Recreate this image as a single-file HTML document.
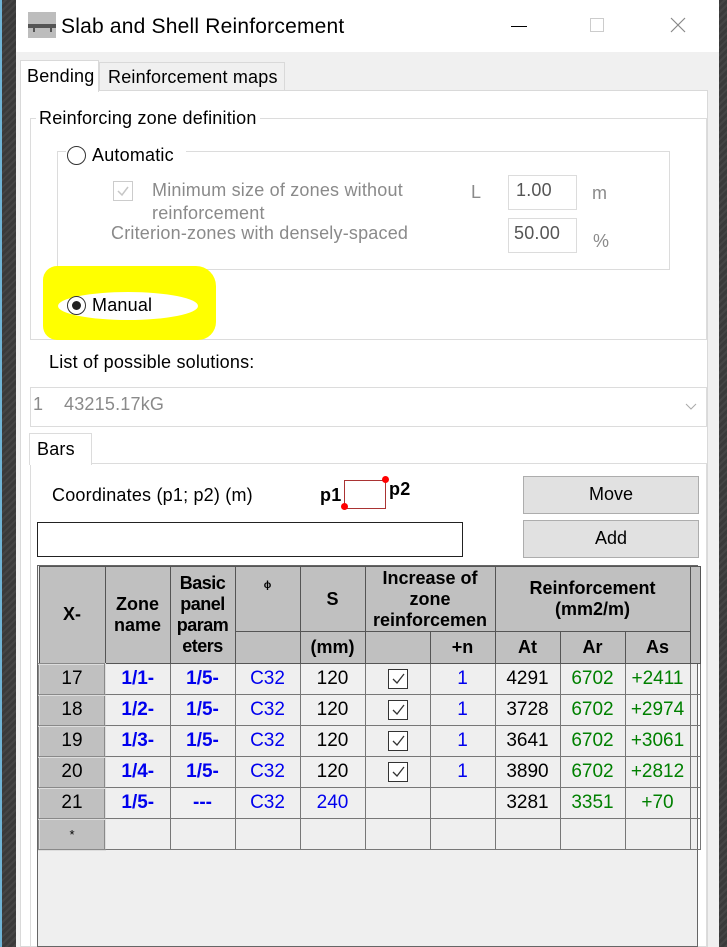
<!DOCTYPE html>
<html><head><meta charset="utf-8"><style>
*{margin:0;padding:0;box-sizing:border-box}
body{width:727px;height:947px;overflow:hidden;position:relative;background:#f0f0f0;font-family:"Liberation Sans",Arial,sans-serif;color:#000}
.a{position:absolute}
.t{position:absolute;font-size:17px;white-space:nowrap;line-height:20px;letter-spacing:0.2px}
.g{color:#8a8a8a}
.inp{position:absolute;background:#fff;border:1px solid #c8c8c8}
.btn{position:absolute;background:#e1e1e1;border:1px solid #adadad;text-align:center;font-size:17px;line-height:35px}
table{position:absolute;left:38px;top:566px;border-collapse:collapse;font-family:"Liberation Sans",Arial,sans-serif;font-weight:bold;font-size:19px;table-layout:fixed}
td{border:1px solid #777;text-align:center;height:31px;padding:0;overflow:hidden;white-space:nowrap}
th{background:#c0c0c0;border:1px solid #555;font-weight:bold;line-height:21px;padding:0;overflow:hidden;white-space:nowrap;font-size:18px}
.rh{background:#c0c0c0;font-weight:normal;border:2px outset #ddd}
.b{color:#0000ee}.n{font-weight:normal}.gr{color:#008000;font-weight:normal}
.sh{background:#f0f0f0}
.cb{display:inline-block;width:20px;height:20px;border:1px solid #333;background:#fff;vertical-align:middle;position:relative}
</style></head><body>
<div class="a" style="left:0;top:0;width:16px;height:947px;background:repeating-linear-gradient(135deg,#3a3a3a 0 3px,#454545 3px 5px)"></div>
<div class="a" style="left:0;top:0;width:2px;height:947px;background:#6fb4d6"></div>
<div class="a" style="left:719px;top:0;width:8px;height:947px;background:repeating-linear-gradient(135deg,#3a3a3a 0 3px,#454545 3px 5px)"></div>
<div class="a" style="left:16px;top:0;width:703px;height:52px;background:#fff"></div>
<div class="a" style="left:28px;top:12px;width:28px;height:26px;background:#bdbdbd"></div>
<div class="a" style="left:28px;top:24px;width:28px;height:4px;background:#555"></div>
<div class="a" style="left:33px;top:28px;width:2px;height:4px;background:#555"></div>
<div class="a" style="left:50px;top:28px;width:2px;height:4px;background:#555"></div>
<div class="t" style="left:61px;top:15px;font-size:21px;line-height:24px">Slab and Shell Reinforcement</div>
<div class="a" style="left:511px;top:26px;width:16px;height:1px;background:#000"></div>
<div class="a" style="left:590px;top:18px;width:14px;height:14px;border:1px solid #ccc"></div>
<svg class="a" style="left:670px;top:17px" width="16" height="16"><path d="M1 1L15 15M15 1L1 15" stroke="#888" stroke-width="1.2"/></svg>
<div class="a" style="left:20px;top:90px;width:688px;height:857px;background:#fff;border:1px solid #d9d9d9"></div>
<div class="a" style="left:20px;top:60px;width:79px;height:32px;background:#fff;border:1px solid #d9d9d9;border-bottom:none"></div>
<div class="t" style="left:27px;top:66px;font-size:18px">Bending</div>
<div class="a" style="left:99px;top:62px;width:186px;height:28px;background:#f0f0f0;border:1px solid #d9d9d9;border-bottom:none"></div>
<div class="t" style="left:108px;top:67px;font-size:18px">Reinforcement maps</div>
<div class="a" style="left:30px;top:118px;width:677px;height:222px;border:1px solid #dcdcdc"></div>
<div class="t" style="left:36px;top:108px;background:#fff;padding:0 3px;font-size:18px">Reinforcing zone definition</div>
<div class="a" style="left:57px;top:151px;width:613px;height:119px;border:1px solid #dcdcdc"></div>
<div class="a" style="left:66px;top:145px;width:120px;height:20px;background:#fff"></div>
<div class="a" style="left:67px;top:146px;width:19px;height:19px;border:1px solid #333;border-radius:50%;background:#fff"></div>
<div class="t" style="left:92px;top:145px;font-size:18px">Automatic</div>
<div class="a" style="left:113px;top:181px;width:20px;height:20px;border:1px solid #ccc"></div>
<svg class="a" style="left:115px;top:183px" width="16" height="16"><path d="M3 8L7 12L13 4" stroke="#c6c6c6" stroke-width="1.5" fill="none"/></svg>
<div class="t g" style="left:152px;top:180px;font-size:18px">Minimum size of zones without</div>
<div class="t g" style="left:152px;top:203px;font-size:18px">reinforcement</div>
<div class="t g" style="left:111px;top:223px;font-size:18px">Criterion-zones with densely-spaced</div>
<div class="t g" style="left:471px;top:182px;font-size:18px">L</div>
<div class="inp" style="left:508px;top:175px;width:69px;height:35px;border-color:#dcdcdc"></div>
<div class="t" style="left:516px;top:180px;color:#555;font-size:18px">1.00</div>
<div class="inp" style="left:508px;top:218px;width:69px;height:35px;border-color:#dcdcdc"></div>
<div class="t" style="left:514px;top:223px;color:#555;font-size:18px">50.00</div>
<div class="t g" style="left:592px;top:183px;font-size:18px">m</div>
<div class="t g" style="left:593px;top:231px;font-size:18px">%</div>
<div class="a" style="left:43px;top:266px;width:173px;height:74px;background:#ffff00;border-radius:14px 20px 18px 14px"></div>
<div class="a" style="left:58px;top:292px;width:140px;height:28px;background:#fff;border-radius:50%"></div>
<div class="a" style="left:67px;top:296px;width:19px;height:19px;border:1px solid #333;border-radius:50%;background:#fff"></div>
<div class="a" style="left:72px;top:301px;width:9px;height:9px;border-radius:50%;background:#222"></div>
<div class="t" style="left:92px;top:295px;font-size:18px">Manual</div>
<div class="t" style="left:49px;top:352px;font-size:18px">List of possible solutions:</div>
<div class="a" style="left:30px;top:387px;width:677px;height:40px;border:1px solid #dcdcdc;background:#fff"></div>
<div class="t g" style="left:33px;top:394px;font-size:18px">1&nbsp;&nbsp;&nbsp;&nbsp;43215.17kG</div>
<svg class="a" style="left:685px;top:403px" width="12" height="8"><path d="M1 1L6 6L11 1" stroke="#aaa" fill="none"/></svg>
<div class="a" style="left:30px;top:463px;width:677px;height:484px;border:1px solid #dcdcdc;background:#fff"></div>
<div class="a" style="left:29px;top:433px;width:63px;height:32px;background:#fff;border:1px solid #dcdcdc;border-bottom:none"></div>
<div class="t" style="left:37px;top:439px;font-size:18px">Bars</div>
<div class="t" style="left:52px;top:485px;font-size:18px">Coordinates (p1; p2) (m)</div>
<div class="t" style="left:320px;top:485px;font-weight:bold;font-size:18px">p1</div>
<div class="t" style="left:389px;top:479px;font-weight:bold;font-size:18px">p2</div>
<div class="a" style="left:344px;top:480px;width:42px;height:29px;border:1.5px solid #a33"></div>
<div class="a" style="left:341px;top:503px;width:7px;height:7px;border-radius:50%;background:#f00"></div>
<div class="a" style="left:382px;top:476px;width:7px;height:7px;border-radius:50%;background:#f00"></div>
<div class="btn" style="left:523px;top:476px;width:176px;height:38px;font-size:18px">Move</div>
<div class="btn" style="left:523px;top:520px;width:176px;height:38px;font-size:18px">Add</div>
<div class="a" style="left:37px;top:522px;width:426px;height:35px;border:1px solid #222;background:#fff"></div>
<div class="a" style="left:37px;top:565px;width:661px;height:382px;background:#efefef;border:1px solid #666"></div>
<table>
<colgroup><col style="width:66px"><col style="width:65px"><col style="width:65px"><col style="width:65px"><col style="width:65px"><col style="width:65px"><col style="width:65px"><col style="width:65px"><col style="width:65px"><col style="width:65px"><col style="width:10px"></colgroup>
<tr style="height:65px"><th rowspan="2">X-</th><th rowspan="2">Zone<br>name</th><th rowspan="2" style="letter-spacing:-0.5px">Basic<br>panel<br>param<br>eters</th><th style="font-size:10px;vertical-align:top;padding-top:8px">ϕ</th><th>S</th><th colspan="2" style="vertical-align:bottom">Increase of<br>zone<br>reinforcemen</th><th colspan="3">Reinforcement<br>(mm2/m)</th><th rowspan="2"></th></tr>
<tr style="height:32px"><th></th><th>(mm)</th><th></th><th>+n</th><th>At</th><th>Ar</th><th>As</th></tr>
<tr><td class="rh">17</td><td class="b">1/1-</td><td class="b">1/5-</td><td class="b n">C32</td><td class="n sh">120</td><td><span class="cb"><svg width="18" height="18" style="position:absolute;left:0;top:0"><path d="M4 9L8 13L15 4" stroke="#333" stroke-width="1.3" fill="none"/></svg></span></td><td class="b n">1</td><td class="n">4291</td><td class="gr">6702</td><td class="gr">+2411</td><td></td></tr>
<tr><td class="rh">18</td><td class="b">1/2-</td><td class="b">1/5-</td><td class="b n">C32</td><td class="n sh">120</td><td><span class="cb"><svg width="18" height="18" style="position:absolute;left:0;top:0"><path d="M4 9L8 13L15 4" stroke="#333" stroke-width="1.3" fill="none"/></svg></span></td><td class="b n">1</td><td class="n">3728</td><td class="gr">6702</td><td class="gr">+2974</td><td></td></tr>
<tr><td class="rh">19</td><td class="b">1/3-</td><td class="b">1/5-</td><td class="b n">C32</td><td class="n sh">120</td><td><span class="cb"><svg width="18" height="18" style="position:absolute;left:0;top:0"><path d="M4 9L8 13L15 4" stroke="#333" stroke-width="1.3" fill="none"/></svg></span></td><td class="b n">1</td><td class="n">3641</td><td class="gr">6702</td><td class="gr">+3061</td><td></td></tr>
<tr><td class="rh">20</td><td class="b">1/4-</td><td class="b">1/5-</td><td class="b n">C32</td><td class="n sh">120</td><td><span class="cb"><svg width="18" height="18" style="position:absolute;left:0;top:0"><path d="M4 9L8 13L15 4" stroke="#333" stroke-width="1.3" fill="none"/></svg></span></td><td class="b n">1</td><td class="n">3890</td><td class="gr">6702</td><td class="gr">+2812</td><td></td></tr>
<tr><td class="rh">21</td><td class="b">1/5-</td><td class="b sh">---</td><td class="b n">C32</td><td class="b n">240</td><td class="sh"></td><td class="sh"></td><td class="n">3281</td><td class="gr">3351</td><td class="gr">+70</td><td></td></tr>
<tr><td class="rh" style="height:27px;font-size:13px">*</td><td style="height:27px"></td><td></td><td></td><td></td><td></td><td></td><td></td><td></td><td></td><td></td></tr>
</table>
</body></html>
